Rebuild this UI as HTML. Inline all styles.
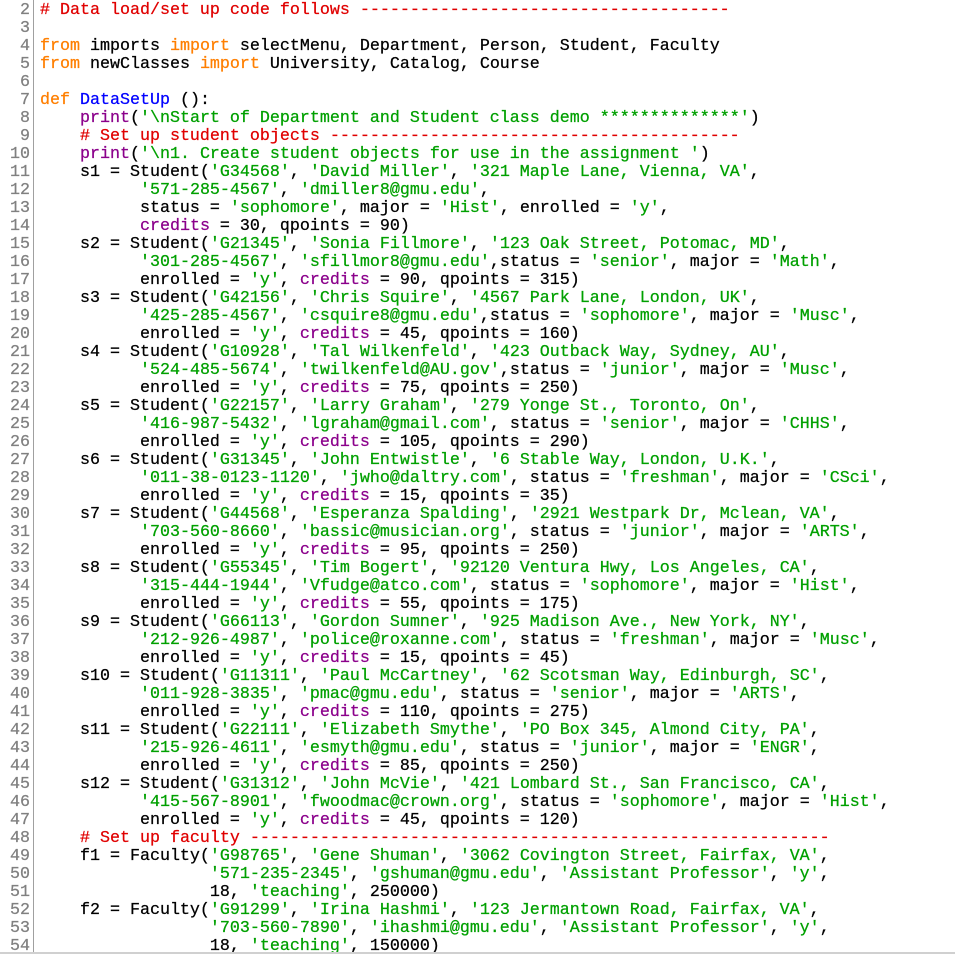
<!DOCTYPE html>
<html><head><meta charset="utf-8"><style>
html,body{margin:0;padding:0;background:#fff;width:955px;height:954px;overflow:hidden}
#g{position:absolute;left:0;top:0;width:33px;height:952px;border-right:1px solid #a0a0a0;background:#fff}
#c{position:absolute;left:0;top:-16px;font-family:"Liberation Mono",monospace;font-size:16.67px;line-height:18px;color:#000;-webkit-text-stroke:0.25px currentColor}
.l{height:18px;position:relative;white-space:pre}
.n{position:absolute;left:0;width:30px;text-align:right;color:#808080}
.t{position:absolute;left:40px;white-space:pre}
.k{color:#ff7f00}.f{color:#0000ff}.p{color:#8b008b}.s{color:#00a000}.c{color:#e00000}
#b{position:absolute;left:0;top:952px;width:955px;height:2px;background:#d0d0d0}
</style></head><body>
<div id="g"></div>
<div id="c"><div class="l"><span class="n">1</span><span class="t"></span></div><div class="l"><span class="n">2</span><span class="t"><span class="c"># Data load/set up code follows -------------------------------------</span></span></div><div class="l"><span class="n">3</span><span class="t"></span></div><div class="l"><span class="n">4</span><span class="t"><span class="k">from</span> imports <span class="k">import</span> selectMenu, Department, Person, Student, Faculty</span></div><div class="l"><span class="n">5</span><span class="t"><span class="k">from</span> newClasses <span class="k">import</span> University, Catalog, Course</span></div><div class="l"><span class="n">6</span><span class="t"></span></div><div class="l"><span class="n">7</span><span class="t"><span class="k">def</span> <span class="f">DataSetUp</span> ():</span></div><div class="l"><span class="n">8</span><span class="t">    <span class="p">print</span>(<span class="s">'\nStart of Department and Student class demo **************'</span>)</span></div><div class="l"><span class="n">9</span><span class="t">    <span class="c"># Set up student objects -----------------------------------------</span></span></div><div class="l"><span class="n">10</span><span class="t">    <span class="p">print</span>(<span class="s">'\n1. Create student objects for use in the assignment '</span>)</span></div><div class="l"><span class="n">11</span><span class="t">    s1 = Student(<span class="s">'G34568'</span>, <span class="s">'David Miller'</span>, <span class="s">'321 Maple Lane, Vienna, VA'</span>,</span></div><div class="l"><span class="n">12</span><span class="t">          <span class="s">'571-285-4567'</span>, <span class="s">'dmiller8@gmu.edu'</span>,</span></div><div class="l"><span class="n">13</span><span class="t">          status = <span class="s">'sophomore'</span>, major = <span class="s">'Hist'</span>, enrolled = <span class="s">'y'</span>,</span></div><div class="l"><span class="n">14</span><span class="t">          <span class="p">credits</span> = 30, qpoints = 90)</span></div><div class="l"><span class="n">15</span><span class="t">    s2 = Student(<span class="s">'G21345'</span>, <span class="s">'Sonia Fillmore'</span>, <span class="s">'123 Oak Street, Potomac, MD'</span>,</span></div><div class="l"><span class="n">16</span><span class="t">          <span class="s">'301-285-4567'</span>, <span class="s">'sfillmor8@gmu.edu'</span>,status = <span class="s">'senior'</span>, major = <span class="s">'Math'</span>,</span></div><div class="l"><span class="n">17</span><span class="t">          enrolled = <span class="s">'y'</span>, <span class="p">credits</span> = 90, qpoints = 315)</span></div><div class="l"><span class="n">18</span><span class="t">    s3 = Student(<span class="s">'G42156'</span>, <span class="s">'Chris Squire'</span>, <span class="s">'4567 Park Lane, London, UK'</span>,</span></div><div class="l"><span class="n">19</span><span class="t">          <span class="s">'425-285-4567'</span>, <span class="s">'csquire8@gmu.edu'</span>,status = <span class="s">'sophomore'</span>, major = <span class="s">'Musc'</span>,</span></div><div class="l"><span class="n">20</span><span class="t">          enrolled = <span class="s">'y'</span>, <span class="p">credits</span> = 45, qpoints = 160)</span></div><div class="l"><span class="n">21</span><span class="t">    s4 = Student(<span class="s">'G10928'</span>, <span class="s">'Tal Wilkenfeld'</span>, <span class="s">'423 Outback Way, Sydney, AU'</span>,</span></div><div class="l"><span class="n">22</span><span class="t">          <span class="s">'524-485-5674'</span>, <span class="s">'twilkenfeld@AU.gov'</span>,status = <span class="s">'junior'</span>, major = <span class="s">'Musc'</span>,</span></div><div class="l"><span class="n">23</span><span class="t">          enrolled = <span class="s">'y'</span>, <span class="p">credits</span> = 75, qpoints = 250)</span></div><div class="l"><span class="n">24</span><span class="t">    s5 = Student(<span class="s">'G22157'</span>, <span class="s">'Larry Graham'</span>, <span class="s">'279 Yonge St., Toronto, On'</span>,</span></div><div class="l"><span class="n">25</span><span class="t">          <span class="s">'416-987-5432'</span>, <span class="s">'lgraham@gmail.com'</span>, status = <span class="s">'senior'</span>, major = <span class="s">'CHHS'</span>,</span></div><div class="l"><span class="n">26</span><span class="t">          enrolled = <span class="s">'y'</span>, <span class="p">credits</span> = 105, qpoints = 290)</span></div><div class="l"><span class="n">27</span><span class="t">    s6 = Student(<span class="s">'G31345'</span>, <span class="s">'John Entwistle'</span>, <span class="s">'6 Stable Way, London, U.K.'</span>,</span></div><div class="l"><span class="n">28</span><span class="t">          <span class="s">'011-38-0123-1120'</span>, <span class="s">'jwho@daltry.com'</span>, status = <span class="s">'freshman'</span>, major = <span class="s">'CSci'</span>,</span></div><div class="l"><span class="n">29</span><span class="t">          enrolled = <span class="s">'y'</span>, <span class="p">credits</span> = 15, qpoints = 35)</span></div><div class="l"><span class="n">30</span><span class="t">    s7 = Student(<span class="s">'G44568'</span>, <span class="s">'Esperanza Spalding'</span>, <span class="s">'2921 Westpark Dr, Mclean, VA'</span>,</span></div><div class="l"><span class="n">31</span><span class="t">          <span class="s">'703-560-8660'</span>, <span class="s">'bassic@musician.org'</span>, status = <span class="s">'junior'</span>, major = <span class="s">'ARTS'</span>,</span></div><div class="l"><span class="n">32</span><span class="t">          enrolled = <span class="s">'y'</span>, <span class="p">credits</span> = 95, qpoints = 250)</span></div><div class="l"><span class="n">33</span><span class="t">    s8 = Student(<span class="s">'G55345'</span>, <span class="s">'Tim Bogert'</span>, <span class="s">'92120 Ventura Hwy, Los Angeles, CA'</span>,</span></div><div class="l"><span class="n">34</span><span class="t">          <span class="s">'315-444-1944'</span>, <span class="s">'Vfudge@atco.com'</span>, status = <span class="s">'sophomore'</span>, major = <span class="s">'Hist'</span>,</span></div><div class="l"><span class="n">35</span><span class="t">          enrolled = <span class="s">'y'</span>, <span class="p">credits</span> = 55, qpoints = 175)</span></div><div class="l"><span class="n">36</span><span class="t">    s9 = Student(<span class="s">'G66113'</span>, <span class="s">'Gordon Sumner'</span>, <span class="s">'925 Madison Ave., New York, NY'</span>,</span></div><div class="l"><span class="n">37</span><span class="t">          <span class="s">'212-926-4987'</span>, <span class="s">'police@roxanne.com'</span>, status = <span class="s">'freshman'</span>, major = <span class="s">'Musc'</span>,</span></div><div class="l"><span class="n">38</span><span class="t">          enrolled = <span class="s">'y'</span>, <span class="p">credits</span> = 15, qpoints = 45)</span></div><div class="l"><span class="n">39</span><span class="t">    s10 = Student(<span class="s">'G11311'</span>, <span class="s">'Paul McCartney'</span>, <span class="s">'62 Scotsman Way, Edinburgh, SC'</span>,</span></div><div class="l"><span class="n">40</span><span class="t">          <span class="s">'011-928-3835'</span>, <span class="s">'pmac@gmu.edu'</span>, status = <span class="s">'senior'</span>, major = <span class="s">'ARTS'</span>,</span></div><div class="l"><span class="n">41</span><span class="t">          enrolled = <span class="s">'y'</span>, <span class="p">credits</span> = 110, qpoints = 275)</span></div><div class="l"><span class="n">42</span><span class="t">    s11 = Student(<span class="s">'G22111'</span>, <span class="s">'Elizabeth Smythe'</span>, <span class="s">'PO Box 345, Almond City, PA'</span>,</span></div><div class="l"><span class="n">43</span><span class="t">          <span class="s">'215-926-4611'</span>, <span class="s">'esmyth@gmu.edu'</span>, status = <span class="s">'junior'</span>, major = <span class="s">'ENGR'</span>,</span></div><div class="l"><span class="n">44</span><span class="t">          enrolled = <span class="s">'y'</span>, <span class="p">credits</span> = 85, qpoints = 250)</span></div><div class="l"><span class="n">45</span><span class="t">    s12 = Student(<span class="s">'G31312'</span>, <span class="s">'John McVie'</span>, <span class="s">'421 Lombard St., San Francisco, CA'</span>,</span></div><div class="l"><span class="n">46</span><span class="t">          <span class="s">'415-567-8901'</span>, <span class="s">'fwoodmac@crown.org'</span>, status = <span class="s">'sophomore'</span>, major = <span class="s">'Hist'</span>,</span></div><div class="l"><span class="n">47</span><span class="t">          enrolled = <span class="s">'y'</span>, <span class="p">credits</span> = 45, qpoints = 120)</span></div><div class="l"><span class="n">48</span><span class="t">    <span class="c"># Set up faculty ----------------------------------------------------------</span></span></div><div class="l"><span class="n">49</span><span class="t">    f1 = Faculty(<span class="s">'G98765'</span>, <span class="s">'Gene Shuman'</span>, <span class="s">'3062 Covington Street, Fairfax, VA'</span>,</span></div><div class="l"><span class="n">50</span><span class="t">                 <span class="s">'571-235-2345'</span>, <span class="s">'gshuman@gmu.edu'</span>, <span class="s">'Assistant Professor'</span>, <span class="s">'y'</span>,</span></div><div class="l"><span class="n">51</span><span class="t">                 18, <span class="s">'teaching'</span>, 250000)</span></div><div class="l"><span class="n">52</span><span class="t">    f2 = Faculty(<span class="s">'G91299'</span>, <span class="s">'Irina Hashmi'</span>, <span class="s">'123 Jermantown Road, Fairfax, VA'</span>,</span></div><div class="l"><span class="n">53</span><span class="t">                 <span class="s">'703-560-7890'</span>, <span class="s">'ihashmi@gmu.edu'</span>, <span class="s">'Assistant Professor'</span>, <span class="s">'y'</span>,</span></div><div class="l"><span class="n">54</span><span class="t">                 18, <span class="s">'teaching'</span>, 150000)</span></div></div>
<div id="b"></div>
</body></html>
